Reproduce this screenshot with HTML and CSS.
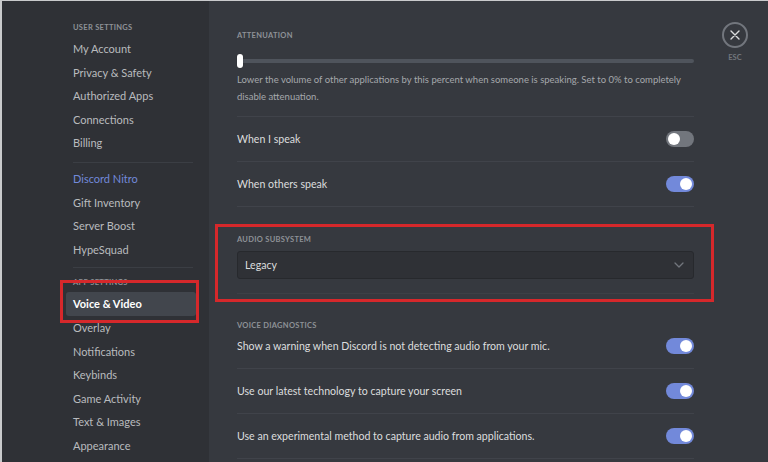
FILE: index.html
```html
<!DOCTYPE html>
<html>
<head>
<meta charset="utf-8">
<link rel="stylesheet" href="styles.css">
</head>
<body>
<div class="app">
  <nav class="sidebar">
    <div class="nav">
      <div class="nav-header">User Settings</div>
      <div class="nav-item">My Account</div>
      <div class="nav-item">Privacy &amp; Safety</div>
      <div class="nav-item">Authorized Apps</div>
      <div class="nav-item">Connections</div>
      <div class="nav-item">Billing</div>
      <div class="nav-sep"></div>
      <div class="nav-item nitro">Discord Nitro</div>
      <div class="nav-item">Gift Inventory</div>
      <div class="nav-item">Server Boost</div>
      <div class="nav-item">HypeSquad</div>
      <div class="nav-sep sep2"></div>
      <div class="nav-header app-header">App Settings</div>
      <div class="nav-item selected">Voice &amp; Video</div>
      <div class="nav-item">Overlay</div>
      <div class="nav-item">Notifications</div>
      <div class="nav-item">Keybinds</div>
      <div class="nav-item">Game Activity</div>
      <div class="nav-item">Text &amp; Images</div>
      <div class="nav-item">Appearance</div>
    </div>
  </nav>
  <main class="main">
    <div class="content">
      <div class="section-title">Attenuation</div>
      <div class="slider">
        <div class="slider-track"></div>
        <div class="slider-knob"></div>
      </div>
      <div class="description">Lower the volume of other applications by this percent when someone is speaking. Set to 0% to completely disable attenuation.</div>
      <div class="row">
        <span class="label">When I speak</span>
        <span class="toggle off"><span class="knob"></span></span>
      </div>
      <div class="row">
        <span class="label">When others speak</span>
        <span class="toggle on"><span class="knob"></span></span>
      </div>
      <div class="highlight-box">
        <div class="section-title">Audio Subsystem</div>
        <div class="select">
          <span class="select-value">Legacy</span>
          <svg class="chevron" width="10" height="6" viewBox="0 0 10 6"><path d="M1 1 L5 5 L9 1" fill="none" stroke="#72767d" stroke-width="1.3" stroke-linecap="round" stroke-linejoin="round"/></svg>
        </div>
        <div class="inner-sep"></div>
      </div>
      <div class="section-title diag-title">Voice Diagnostics</div>
      <div class="row first">
        <span class="label">Show a warning when Discord is not detecting audio from your mic.</span>
        <span class="toggle on"><span class="knob"></span></span>
      </div>
      <div class="row">
        <span class="label">Use our latest technology to capture your screen</span>
        <span class="toggle on"><span class="knob"></span></span>
      </div>
      <div class="row">
        <span class="label">Use an experimental method to capture audio from applications.</span>
        <span class="toggle on"><span class="knob"></span></span>
      </div>
    </div>
    <div class="tools">
      <div class="close">
        <svg width="10" height="10" viewBox="0 0 10 10"><path d="M1 1 L9 9 M9 1 L1 9" stroke="#dcddde" stroke-width="1.4" stroke-linecap="round"/></svg>
      </div>
      <div class="esc">ESC</div>
    </div>
  </main>
</div>
</body>
</html>
```

FILE: styles.css
```css
* { box-sizing: border-box; }
html, body { margin: 0; padding: 0; }
body {
  width: 768px;
  height: 462px;
  overflow: hidden;
  background: #36393f;
  font-family: Lato, "Open Sans", sans-serif;
}
.app {
  display: flex;
  height: 462px;
  border-top: 1px solid #c9cacc;
  border-left: 2px solid #c9cacc;
}
.sidebar {
  width: 207px;
  flex: none;
  background: #2f3136;
  padding: 22px 13px 0 64px;
}
.nav-header {
  height: 10px;
  line-height: 10px;
  font-size: 7.5px;
  font-weight: 700;
  letter-spacing: 0.3px;
  text-transform: uppercase;
  color: #8e9297;
  padding-left: 7px;
  margin-bottom: 4px;
}
.app-header { margin-top: 10px; margin-bottom: 4px; }
.nav-item {
  height: 23.6px;
  line-height: 23.6px;
  padding-left: 7px;
  font-size: 11px;
  color: #b9bbbe;
  border-radius: 3px;
  white-space: nowrap;
}
.nav-item.nitro { color: #7289da; }
.nav-item.selected {
  position: relative;
  background: #42464d;
  color: #ffffff;
  font-weight: 700;
}
.nav-item.selected::after {
  content: "";
  position: absolute;
  left: -6px;
  right: -3px;
  top: -12px;
  bottom: -7px;
  border: 3px solid #d6282b;
}
.nav-sep {
  height: 1px;
  background: #3b3e44;
  margin: 7px 3px 4px 7px;
}
.nav-sep.sep2 { margin-top: 6px; margin-bottom: 0; }

.main {
  flex: 1;
  display: flex;
  padding-left: 28px;
}
.content {
  width: 457px;
  flex: none;
  padding-top: 30px;
}
.section-title {
  height: 10px;
  line-height: 10px;
  font-size: 7.5px;
  font-weight: 700;
  letter-spacing: 0.3px;
  text-transform: uppercase;
  color: #8e9297;
}
.slider {
  position: relative;
  height: 14px;
  margin-top: 13px;
  display: flex;
  align-items: center;
}
.slider-track {
  flex: 1;
  height: 4px;
  border-radius: 2px;
  background: #4f545c;
}
.slider-knob {
  position: absolute;
  left: 0;
  top: 0;
  width: 6px;
  height: 14px;
  border-radius: 3px;
  background: #ffffff;
  box-shadow: 0 0 1px rgba(0,0,0,0.4);
}
.description {
  margin-top: 3px;
  font-size: 9.5px;
  line-height: 17px;
  color: #a5a8ac;
  padding-bottom: 11px;
  border-bottom: 1px solid #40434a;
}
.row {
  height: 45px;
  display: flex;
  align-items: center;
  justify-content: space-between;
  border-bottom: 1px solid #40434a;
}
.row.first {
  height: auto;
  padding: 7px 0 14px;
}
.label {
  font-size: 10.6px;
  color: #dcddde;
  white-space: nowrap;
}
.toggle {
  width: 28px;
  height: 16px;
  border-radius: 8px;
  display: flex;
  align-items: center;
  padding: 0 2px;
  flex: none;
}
.toggle.off { background: #72767d; justify-content: flex-start; }
.toggle.on { background: #7289da; justify-content: flex-end; }
.knob {
  width: 12px;
  height: 12px;
  border-radius: 50%;
  background: #ffffff;
}
.highlight-box {
  margin: 17px -20px 0 -22px;
  border: 3px solid #d6282b;
  padding: 8px 17px 5px 19px;
}
.select {
  margin-top: 6px;
  height: 28px;
  background: #2f3136;
  border: 1px solid #27292d;
  border-radius: 3px;
  display: flex;
  align-items: center;
  justify-content: space-between;
  padding: 0 9px 0 7px;
}
.select-value {
  font-size: 10.6px;
  color: #dcddde;
}
.inner-sep {
  margin-top: 14px;
  height: 1px;
  background: #3d4046;
}
.diag-title { margin-top: 19px; }
.tools {
  margin-left: 28px;
  padding-top: 21px;
  display: flex;
  flex-direction: column;
  align-items: center;
  width: 26px;
}
.close {
  width: 26px;
  height: 26px;
  border-radius: 50%;
  border: 2px solid #72767d;
  display: flex;
  align-items: center;
  justify-content: center;
}
.esc {
  margin-top: 5px;
  font-size: 7.5px;
  font-weight: 700;
  color: #72767d;
}
```
